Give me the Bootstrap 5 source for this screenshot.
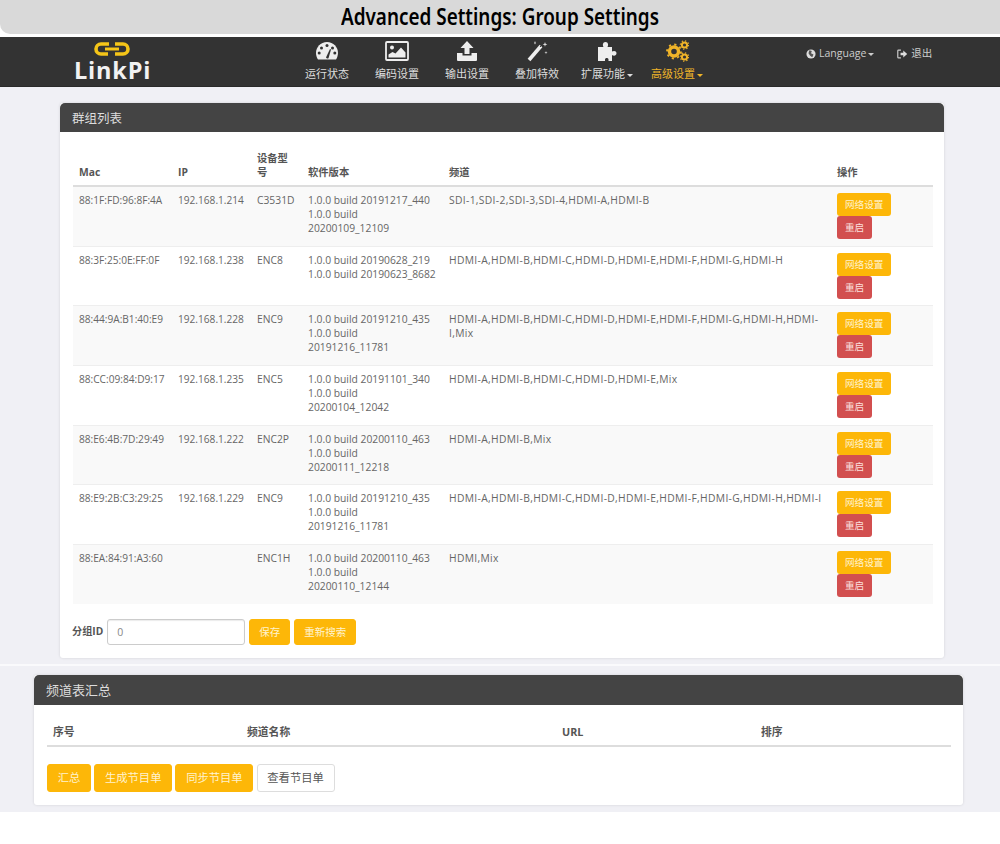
<!DOCTYPE html>
<html lang="zh-CN">
<head>
<meta charset="utf-8">
<title>LinkPi</title>
<link href="https://cdn.jsdelivr.net/npm/bootstrap@5.3.0/dist/css/bootstrap.min.css" rel="stylesheet">
<style>
html,body{background:#fff;}
body{margin:0;font-family:"Open Sans","Noto Sans CJK SC",sans-serif;font-size:10.2px;color:#666;}
.cap-bar{height:34px;background:#d9d9d9;border-radius:0 0 0 10px;font-family:"Noto Sans",sans-serif;font-weight:600;font-size:24px;line-height:32px;color:#000;text-align:center;margin-bottom:3px;white-space:nowrap;overflow:hidden;}
.cap-text{display:inline-block;transform:scaleX(.787);transform-origin:center;}
.lp-nav{height:50px;background:#333;padding:0;align-items:stretch;justify-content:flex-start;flex-wrap:nowrap;border-bottom:1px solid #2a2a2a;}
.lp-brand{width:292px;padding-left:74px;flex:none;}
.lp-brand svg{display:block;margin:4px 0 0 19px;}
.lp-word{display:block;color:#f2f2f2;font-size:23.5px;font-weight:700;line-height:21px;letter-spacing:.8px;margin-top:3px;}
.lp-item{width:70px;flex:none;text-align:center;color:#ddd;font-size:11px;line-height:14px;padding-top:3px;text-decoration:none;white-space:nowrap;}
.lp-item svg{display:block;margin:0 auto 5px;height:22px;}
.lp-on{color:#f0b429;}
.lp-caret{display:inline-block;border-top:3px solid currentColor;border-left:3px solid transparent;border-right:3px solid transparent;vertical-align:middle;margin-left:2px;}
.lp-right{margin-left:94px;flex:none;display:flex;gap:23px;color:#ccc;font-size:10.5px;padding-top:9px;line-height:14px;}
.lp-right svg{vertical-align:-2px;margin-right:3px;}
.lp-main{background:#f0f0f5;height:725px;padding-top:16px;}
.lp-panel{border:0;border-radius:3px;background:#fff;box-shadow:0 0 3px rgba(0,0,0,.12);}
.lp-first{margin:0 56px 0 60px;height:555px;}
.lp-second{margin:0 37px 0 34px;height:130px;}
.lp-split{height:2px;background:#fafafc;margin:6px 0 9px;}
.lp-head{background:#444;color:#ddd;border:0;border-radius:3px 3px 0 0;padding:0 12px;height:29px;line-height:31px;font-size:12.5px;}
.lp-second .lp-head{height:30px;line-height:30px;font-size:13px;}
.lp-body-a{padding:13px 11px 0 13px;}
.lp-body-b{padding:20px 12px 0 13px;}
.lp-table{table-layout:fixed;width:100%;margin:0;font-size:10.3px;line-height:14px;--bs-table-striped-bg:#f9f9f9;--bs-table-bg:transparent;--bs-table-color:#666;--bs-table-striped-color:#666;}
.lp-table th{font-weight:700;color:#555;padding:6px;vertical-align:bottom;border-bottom:2px solid #ddd;}
.lp-table td{padding:6px 6px 6.7px;vertical-align:top;border-top:1px solid #eee;border-bottom:0;word-break:break-word;}
.lp-table td:nth-child(1),.lp-table td:nth-child(2){font-size:10.15px;}
.lp-table td:nth-child(5){letter-spacing:.33px;}
.lp-table thead tr,.lp-table tbody tr:first-child td{border-top:0;}
.c-mac{width:99px}.c-ip{width:79px}.c-mod{width:51px}.c-sw{width:141px}.c-ch{width:388px}
.d-a{width:194px}.d-b{width:315px}.d-c{width:199px}
.lp-sum th{font-size:10.8px;padding:0 6px 6px;}
.lp-btn{display:block;width:max-content;border:0;border-radius:3px;font-size:9.6px;line-height:23px;height:23px;padding:0 8px;color:#fff;}
.lp-y{background:#fdb708;color:#fff3cf;}
.lp-r{background:#d24f4f;color:#fbe0df;}
.lp-form{margin-top:15px;gap:4px;align-items:center;margin-left:-1px;}
.lp-form label{font-weight:700;color:#555;font-size:10.2px;margin-right:0;}
.lp-input{width:138px;height:26px;border:1px solid #ccc;border-radius:3px;font-size:10.5px;padding:0 9px;color:#888;background:#fff;box-shadow:inset 0 1px 1px rgba(0,0,0,.08);}
.lp-act{border:1px solid #fdb708;background:#fdb708;color:#fff3cf;border-radius:3px;font-size:10.5px;height:26px;line-height:24px;padding:0 9px;}
.lp-row2{margin-top:17px;gap:3.300px;}
.lp-act2{height:28px;line-height:26px;font-size:11.300px;padding:0 9.700px;white-space:nowrap;}
.lp-white{background:#fff;border-color:#ddd;color:#555;}
</style>
</head>
<body>
<div class="cap-bar"><span class="cap-text">Advanced Settings: Group Settings</span></div>
<nav class="navbar lp-nav d-flex">
  <div class="lp-brand">
    <svg width="38" height="16" viewBox="0 0 38 16" fill="none" stroke="#f5c518" stroke-width="3.6"><path d="M16 3H8a5 5 0 0 0 0 10h7"/><path d="M22 3h8a5 5 0 0 1 0 10h-8"/><path d="M12 8h14" stroke-width="3"/></svg>
    <span class="lp-word">LinkPi</span>
  </div>
  <a class="lp-item" href="#"><svg viewBox="0 0 24 20" width="24" fill="#eee"><path d="M12 1C5.600 1 1 6 1 12c0 2.600.9 4.800 2 6.500h18c1.100-1.700 2-3.900 2-6.500C23 6 18.400 1 12 1z"/><g fill="#333"><circle cx="12" cy="4.500" r="1.500"/><circle cx="6.500" cy="7" r="1.500"/><circle cx="17.500" cy="7" r="1.500"/><circle cx="4.200" cy="12" r="1.500"/><circle cx="19.800" cy="12" r="1.500"/><path d="M11 16.500l4-8.500 1 .4-2.500 8.800a1.800 1.800 0 0 1-2.500-.7z"/></g></svg>运行状态</a>
  <a class="lp-item" href="#"><svg viewBox="0 0 24 20" width="24"><rect x="1" y="1" width="22" height="18" rx="1" fill="none" stroke="#eee" stroke-width="1.800"/><circle cx="7" cy="6.500" r="2" fill="#eee"/><path d="M3.500 16.500v-3l4-2.500 3 1.500 5.500-6 4.500 5v5z" fill="#eee"/></svg>编码设置</a>
  <a class="lp-item" href="#"><svg viewBox="0 0 24 20" width="24" fill="#eee"><path d="M12 0l6.500 7H14.500v6h-5V7H5.500z"/><path d="M2 12h5.500v2.500h9V12H22v7a1 1 0 0 1-1 1H3a1 1 0 0 1-1-1z"/></svg>输出设置</a>
  <a class="lp-item" href="#"><svg viewBox="0 0 24 20" width="24"><path d="M4 19L16 5" stroke="#eee" stroke-width="3.600"/><path d="M15 6l2-2.300" stroke="#333" stroke-width="1"/><g fill="#ddd"><path d="M10 0l.8 2-.8 1.600L9.200 2z"/><path d="M20 1l.6 1.800 1.800.6-1.800.6-.6 1.800-.6-1.800-1.800-.6 1.800-.6z"/><path d="M21 10l.4 1.200 1.200.4-1.200.4-.4 1.200-.4-1.200-1.200-.4 1.200-.4z"/></g></svg>叠加特效</a>
  <a class="lp-item" href="#"><svg viewBox="0 0 24 20" width="24" fill="#eee"><path d="M3 6h5.500C7.500 4.500 7.500 1 10.500 1s3 3.500 2 5H17v4.500c1.500-1 4.500-1 4.500 1.800s-3 2.700-4.500 1.800V20h-3.500v-1.500c0-2-3.500-2-3.500 0V20H3z"/></svg>扩展功能<span class="lp-caret"></span></a>
  <a class="lp-item lp-on" href="#"><svg viewBox="0 0 24 20" width="24" fill="none" stroke="#f0b429"><circle cx="9" cy="10.500" r="4.500" stroke-width="3.400"/><circle cx="9" cy="10.500" r="7" stroke-width="1.800" stroke-dasharray="2.200 3.300"/><circle cx="19.500" cy="4" r="2.600" stroke-width="2"/><circle cx="19.500" cy="4" r="4.200" stroke-width="1.200" stroke-dasharray="1.300 2"/><circle cx="19.500" cy="16" r="2.600" stroke-width="2"/><circle cx="19.500" cy="16" r="4.200" stroke-width="1.200" stroke-dasharray="1.300 2"/></svg>高级设置<span class="lp-caret"></span></a>
  <div class="lp-right">
    <span><svg viewBox="0 0 12 12" width="10" height="10"><circle cx="6" cy="6" r="5.500" fill="#ddd"/><path d="M4 1.500l3 1-1 2.500 3 1.500L7.500 10 5 8 3 5z" fill="#555"/></svg>Language<span class="lp-caret"></span></span>
    <span><svg viewBox="0 0 14 12" width="11" height="10"><path d="M5 1H2a1 1 0 0 0-1 1v8a1 1 0 0 0 1 1h3" fill="none" stroke="#ccc" stroke-width="1.500"/><path d="M4.500 4.500H8V1.500L13 6 8 10.500V7.500H4.500z" fill="#ddd"/></svg>退出</span>
  </div>
</nav>
<div class="lp-main">
  <section class="card lp-panel lp-first">
    <div class="card-header lp-head">群组列表</div>
    <div class="lp-body-a">
      <table class="table table-striped lp-table">
        <colgroup><col class="c-mac"><col class="c-ip"><col class="c-mod"><col class="c-sw"><col class="c-ch"><col></colgroup>
        <thead><tr><th>Mac</th><th>IP</th><th>设备型号</th><th>软件版本</th><th>频道</th><th>操作</th></tr></thead>
        <tbody>
          <tr><td>88:1F:FD:96:8F:4A</td><td>192.168.1.214</td><td>C3531D</td><td>1.0.0 build 20191217_440<br>1.0.0 build<br>20200109_12109</td><td>SDI-1,SDI-2,SDI-3,SDI-4,HDMI-A,HDMI-B</td><td><button class="btn lp-btn lp-y">网络设置</button><button class="btn lp-btn lp-r">重启</button></td></tr>
          <tr><td>88:3F:25:0E:FF:0F</td><td>192.168.1.238</td><td>ENC8</td><td>1.0.0 build 20190628_219<br>1.0.0 build 20190623_8682</td><td>HDMI-A,HDMI-B,HDMI-C,HDMI-D,HDMI-E,HDMI-F,HDMI-G,HDMI-H</td><td><button class="btn lp-btn lp-y">网络设置</button><button class="btn lp-btn lp-r">重启</button></td></tr>
          <tr><td>88:44:9A:B1:40:E9</td><td>192.168.1.228</td><td>ENC9</td><td>1.0.0 build 20191210_435<br>1.0.0 build<br>20191216_11781</td><td>HDMI-A,HDMI-B,HDMI-C,HDMI-D,HDMI-E,HDMI-F,HDMI-G,HDMI-H,HDMI-<br>I,Mix</td><td><button class="btn lp-btn lp-y">网络设置</button><button class="btn lp-btn lp-r">重启</button></td></tr>
          <tr><td>88:CC:09:84:D9:17</td><td>192.168.1.235</td><td>ENC5</td><td>1.0.0 build 20191101_340<br>1.0.0 build<br>20200104_12042</td><td>HDMI-A,HDMI-B,HDMI-C,HDMI-D,HDMI-E,Mix</td><td><button class="btn lp-btn lp-y">网络设置</button><button class="btn lp-btn lp-r">重启</button></td></tr>
          <tr><td>88:E6:4B:7D:29:49</td><td>192.168.1.222</td><td>ENC2P</td><td>1.0.0 build 20200110_463<br>1.0.0 build<br>20200111_12218</td><td>HDMI-A,HDMI-B,Mix</td><td><button class="btn lp-btn lp-y">网络设置</button><button class="btn lp-btn lp-r">重启</button></td></tr>
          <tr><td>88:E9:2B:C3:29:25</td><td>192.168.1.229</td><td>ENC9</td><td>1.0.0 build 20191210_435<br>1.0.0 build<br>20191216_11781</td><td>HDMI-A,HDMI-B,HDMI-C,HDMI-D,HDMI-E,HDMI-F,HDMI-G,HDMI-H,HDMI-I</td><td><button class="btn lp-btn lp-y">网络设置</button><button class="btn lp-btn lp-r">重启</button></td></tr>
          <tr><td>88:EA:84:91:A3:60</td><td></td><td>ENC1H</td><td>1.0.0 build 20200110_463<br>1.0.0 build<br>20200110_12144</td><td>HDMI,Mix</td><td><button class="btn lp-btn lp-y">网络设置</button><button class="btn lp-btn lp-r">重启</button></td></tr>
        </tbody>
      </table>
      <div class="d-flex lp-form">
        <label for="gid">分组ID</label>
        <input id="gid" class="lp-input" value="0">
        <button class="btn lp-act">保存</button>
        <button class="btn lp-act">重新搜索</button>
      </div>
    </div>
  </section>
  <div class="lp-split"></div>
  <section class="card lp-panel lp-second">
    <div class="card-header lp-head">频道表汇总</div>
    <div class="lp-body-b">
      <table class="table lp-table lp-sum">
        <colgroup><col class="d-a"><col class="d-b"><col class="d-c"><col></colgroup>
        <thead><tr><th>序号</th><th>频道名称</th><th>URL</th><th>排序</th></tr></thead>
      </table>
      <div class="d-flex lp-row2">
        <button class="btn lp-act lp-act2">汇总</button>
        <button class="btn lp-act lp-act2">生成节目单</button>
        <button class="btn lp-act lp-act2">同步节目单</button>
        <button class="btn lp-act lp-act2 lp-white">查看节目单</button>
      </div>
    </div>
  </section>
</div>
<script src="https://cdn.jsdelivr.net/npm/bootstrap@5.3.0/dist/js/bootstrap.bundle.min.js"></script>
</body>
</html>
